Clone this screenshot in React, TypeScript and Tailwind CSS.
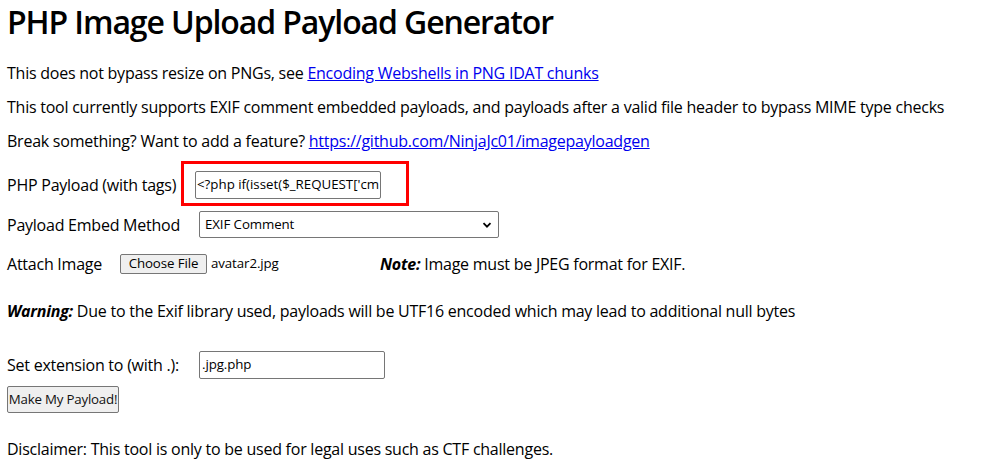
import React from "react";

const F = { fontFamily: '"Open Sans", "Noto Sans", sans-serif' };
const PAYLOAD = "<?php if(isset($_REQUEST['cm";

export default function App() {
  return (
    <div className="w-[1003px] h-[472px] bg-white text-black overflow-hidden pl-[7px]" style={F}>
      <h1 className="h-[41px] pt-[3px] text-[32px] font-semibold leading-[38px] tracking-[-1.1px]">
        PHP Image Upload Payload Generator
      </h1>
      <div className="flex flex-col text-[16px] tracking-[-0.24px]">
        <div className="h-[18px] mt-[23px] leading-[18px] flex items-center">
          This does not bypass resize on PNGs, see&nbsp;
          <a className="text-[#0000ee] underline" href="#">Encoding Webshells in PNG IDAT chunks</a>
        </div>
        <div className="h-[18px] mt-[16px] leading-[18px] flex items-center">
          This tool currently supports EXIF comment embedded payloads, and payloads after a valid file header to bypass MIME type checks
        </div>
        <div className="h-[18px] mt-[16px] leading-[18px] flex items-center">
          Break something? Want to add a feature?&nbsp;
          <a className="text-[#0000ee] underline" href="#">https://github.com/NinjaJc01/imagepayloadgen</a>
        </div>
        <div className="h-[28px] mt-[21px] flex items-center">
          <span className="w-[188px]">PHP Payload (with tags)</span>
          <div className="relative">
            <div className="w-[186px] h-[28px] border border-[#767676] rounded-[2px] flex items-center pl-[1px] overflow-hidden text-[13.3px] whitespace-nowrap tracking-[0px]">
              {PAYLOAD}
            </div>
            <div className="absolute left-[-14px] top-[-10px] w-[228px] h-[45px] border-[3px] border-[#ff0000]"></div>
          </div>
        </div>
        <div className="h-[27px] mt-[12px] flex items-center">
          <span className="w-[192px]">Payload Embed Method</span>
          <div className="w-[300px] h-[27px] border border-[#767676] rounded-[2px] flex items-center justify-between pl-[5px] pr-[6px] text-[13.3px] tracking-[-0.1px]">
            <span>EXIF Comment</span>
            <svg width="10" height="10" viewBox="0 0 10 10" fill="none">
              <path d="M1.5 3.2 L5 6.7 L8.5 3.2" stroke="#000" strokeWidth="1.8" />
            </svg>
          </div>
        </div>
        <div className="h-[20px] mt-[16px] flex items-center">
          <span className="w-[113px]">Attach Image</span>
          <div className="h-[20px] w-[87px] bg-[#efefef] border border-[#767676] rounded-[2px] flex items-center justify-center text-[13.3px] tracking-[-0.1px]">
            Choose File
          </div>
          <span className="ml-[4px] w-[169px] text-[13.3px] tracking-[-0.1px]">avatar2.jpg</span>
          <span>
            <b className="italic font-bold">Note:</b> Image must be JPEG format for EXIF.
          </span>
        </div>
        <div className="h-[18px] mt-[28px] leading-[18px] flex items-center">
          <span>
            <b className="italic font-bold">Warning:</b> Due to the Exif library used, payloads will be UTF16 encoded which may lead to additional null bytes
          </span>
        </div>
        <div className="h-[28px] mt-[31px] flex items-center">
          <span className="w-[192px]">Set extension to (with .):</span>
          <div className="w-[186px] h-[28px] border border-[#767676] rounded-[2px] flex items-center pl-[2px] text-[13.3px] tracking-[-0.1px]">
            .jpg.php
          </div>
        </div>
        <div className="mt-[7px] flex">
          <div className="h-[27px] w-[112px] bg-[#efefef] border border-[#767676] rounded-[2px] flex items-center justify-center text-[13.3px] tracking-[-0.2px] text-[#111]">
            Make My Payload!
          </div>
        </div>
        <div className="h-[18px] mt-[27px] leading-[18px] flex items-center">
          Disclaimer: This tool is only to be used for legal uses such as CTF challenges.
        </div>
      </div>
    </div>
  );
}
